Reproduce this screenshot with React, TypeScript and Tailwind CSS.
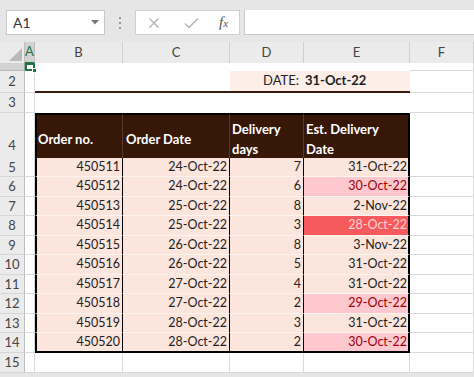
import React from "react";

const GRID = "grid grid-cols-[25px_10px_88px_107px_74px_106px_64px]";
const FONT = { fontFamily: "Lato, 'Open Sans', sans-serif" };

type Flag = null | "light" | "strong";
const rows: [number, string, number, string, Flag][] = [
  [450511, "24-Oct-22", 7, "31-Oct-22", null],
  [450512, "24-Oct-22", 6, "30-Oct-22", "light"],
  [450513, "25-Oct-22", 8, "2-Nov-22", null],
  [450514, "25-Oct-22", 3, "28-Oct-22", "strong"],
  [450515, "26-Oct-22", 8, "3-Nov-22", null],
  [450516, "26-Oct-22", 5, "31-Oct-22", null],
  [450517, "27-Oct-22", 4, "31-Oct-22", null],
  [450518, "27-Oct-22", 2, "29-Oct-22", "light"],
  [450519, "28-Oct-22", 3, "31-Oct-22", null],
  [450520, "28-Oct-22", 2, "30-Oct-22", "light"],
];

function RowHead({ n, sel }: { n: number | string; sel?: boolean }) {
  return (
    <div
      className={
        "flex items-center justify-center border-r border-b text-[13px] leading-none " +
        (sel
          ? "bg-[#d2d2d2] border-r-[#9f9f9f] border-b-[#b8b8b8] text-[#217346]"
          : "bg-[#ebebeb] border-r-[#bdbdbd] border-b-[#d6d6d6] text-[#444444]")
      }
    >
      {n}
    </div>
  );
}

function Grid({ extra = "" }: { extra?: string }) {
  return <div className={"border-r border-b border-[#dadada] bg-white " + extra} />;
}

export default function App() {
  return (
    <div className="w-[474px] h-[377px] overflow-hidden bg-[#e6e6e6] select-none" style={FONT}>
      {/* Toolbar */}
      <div className="h-[42px] flex items-start pt-[10px] bg-[#e6e6e6]">
        <div className="ml-[6px] w-[99px] h-[25px] bg-white border border-[#c8c8c8] flex items-center justify-between pl-[6px] pr-[5px]">
          <span className="text-[14px] text-[#333333]">A1</span>
          <svg width="8" height="5" viewBox="0 0 8 5">
            <path d="M0 0 L8 0 L4 4.5 Z" fill="#777777" />
          </svg>
        </div>
        <div className="w-[30px] h-[25px] flex flex-col items-center justify-center gap-[3px]">
          <div className="w-[2px] h-[2px] bg-[#9a9a9a]" />
          <div className="w-[2px] h-[2px] bg-[#9a9a9a]" />
          <div className="w-[2px] h-[2px] bg-[#9a9a9a]" />
        </div>
        <div className="w-[105px] h-[25px] bg-white border border-[#d0d0d0] flex items-center">
          <svg width="12" height="12" viewBox="0 0 12 12" className="ml-[12px]">
            <path d="M1.5 1.5 L10.5 10.5 M10.5 1.5 L1.5 10.5" stroke="#b4b4b4" strokeWidth="1.4" />
          </svg>
          <svg width="15" height="12" viewBox="0 0 15 12" className="ml-[24px]">
            <path d="M1 6.5 L5 10.5 L14 1.5" stroke="#b4b4b4" strokeWidth="1.5" fill="none" />
          </svg>
          <span
            className="ml-[20px] text-[15px] italic text-[#555555] leading-none"
            style={{ fontFamily: "'Liberation Serif', serif" }}
          >
            f<span className="text-[11px]">x</span>
          </span>
        </div>
        <div className="ml-[4px] flex-1 h-[25px] bg-white border-l border-b border-[#c8c8c8]" />
      </div>

      {/* Column headers */}
      <div className={GRID + " h-[21px] bg-[#ebebeb] text-[13px] text-[#444444]"}>
        <div className="border-r border-b border-[#bdbdbd] flex items-end justify-end pr-[2px] pb-[2px]">
          <svg width="13" height="13" viewBox="0 0 13 13">
            <path d="M13 0 L13 13 L0 13 Z" fill="#b9b9b9" />
          </svg>
        </div>
        <div className="bg-[#d2d2d2] border-r border-[#bdbdbd] border-b-2 border-b-[#217346] flex items-center justify-center text-[#217346]">
          A
        </div>
        {["B", "C", "D", "E", "F"].map((c) => (
          <div key={c} className="border-r border-b border-r-[#cfcfcf] border-b-[#bdbdbd] flex items-center justify-center">
            {c}
          </div>
        ))}
      </div>

      {/* Row 1 */}
      <div className={GRID + " h-[8px] bg-white"}>
        <RowHead n="" sel />
        <div className="border-2 border-[#217346] relative">
          <div className="absolute -right-[4px] -bottom-[4px] w-[5px] h-[5px] bg-[#217346] border border-white" />
        </div>
        <div className="bg-white" />
        <div className="bg-white" />
        <div className="bg-white" />
        <div className="bg-white" />
        <Grid />
      </div>

      {/* Row 2 */}
      <div className={GRID + " h-[22px] text-[13px]"}>
        <RowHead n={2} />
        <Grid />
        <div className="bg-white border-b-2 border-[#3a1a0c]" />
        <div className="bg-white border-b-2 border-[#3a1a0c]" />
        <div className="bg-[#fdeee8] border-b-2 border-[#3a1a0c] flex items-center justify-end pr-[5px] text-[#222222]">
          DATE:
        </div>
        <div className="bg-[#fdeee8] border-b-2 border-[#3a1a0c] flex items-center pl-[1px] font-bold text-[#222222]">
          31-Oct-22
        </div>
        <Grid />
      </div>

      {/* Row 3 */}
      <div className={GRID + " h-[20px]"}>
        <RowHead n={3} />
        <Grid />
        <div className="bg-white" />
        <div className="bg-white" />
        <div className="bg-white" />
        <div className="bg-white" />
        <Grid />
      </div>

      {/* Row 4 header */}
      <div className={GRID + " h-[45px] text-[13px] font-bold text-white leading-[20px]"}>
        <div className="flex items-end justify-center pb-[3px] bg-[#ebebeb] border-r border-b border-r-[#bdbdbd] border-b-[#d6d6d6] text-[#444444] font-normal">
          4
        </div>
        <Grid />
        <div className="bg-[#361708] border-t-2 border-l-2 border-r border-t-black border-l-black border-r-[#5a3a2a] flex items-center pt-[4px] pl-[1px]">
          Order no.
        </div>
        <div className="bg-[#361708] border-t-2 border-r border-t-black border-r-[#5a3a2a] flex items-center pt-[4px] pl-[3px]">
          Order Date
        </div>
        <div className="bg-[#361708] border-t-2 border-r border-t-black border-r-[#5a3a2a] flex items-center pt-[4px] pl-[2px]">
          <span>
            Delivery
            <br />
            days
          </span>
        </div>
        <div className="bg-[#361708] border-t-2 border-r-2 border-black flex items-center pt-[4px] pl-[2px]">
          <span>
            Est. Delivery
            <br />
            Date
          </span>
        </div>
        <Grid />
      </div>

      {/* Data rows */}
      {rows.map(([no, od, days, est, flag], i) => {
        const last = i === rows.length - 1;
        const h = i % 2 === 0 ? "h-[19px]" : "h-[20px]";
        const bb = last ? "border-b-2 border-b-black" : "border-b border-b-[#fdf3ef]";
        const eBg =
          flag === "light"
            ? "bg-[#ffc7ce] text-[#9c0006]"
            : flag === "strong"
            ? "bg-[#f65a5c] text-[#ffd3d3]"
            : "bg-[#fce5dd] text-[#222222]";
        return (
          <div key={no} className={GRID + " " + h + " text-[12.5px] leading-none"}>
            <RowHead n={i + 5} />
            <Grid />
            <div className={"bg-[#fce5dd] text-[#222222] border-l-2 border-l-black border-r border-r-black flex items-center justify-end pr-[2px] " + bb}>
              {no}
            </div>
            <div className={"bg-[#fce5dd] text-[#222222] border-r border-r-black flex items-center justify-end pr-[2px] " + bb}>
              {od}
            </div>
            <div className={"bg-[#fce5dd] text-[#222222] border-r border-r-black flex items-center justify-end pr-[2px] " + bb}>
              {days}
            </div>
            <div className={eBg + " border-r-2 border-r-black flex items-center justify-end pr-[1px] " + bb}>
              {est}
            </div>
            <Grid />
          </div>
        );
      })}

      {/* Row 15 */}
      <div className={GRID + " h-[20px]"}>
        <RowHead n={15} />
        <Grid />
        <Grid />
        <Grid />
        <Grid />
        <Grid />
        <Grid />
      </div>
    </div>
  );
}
